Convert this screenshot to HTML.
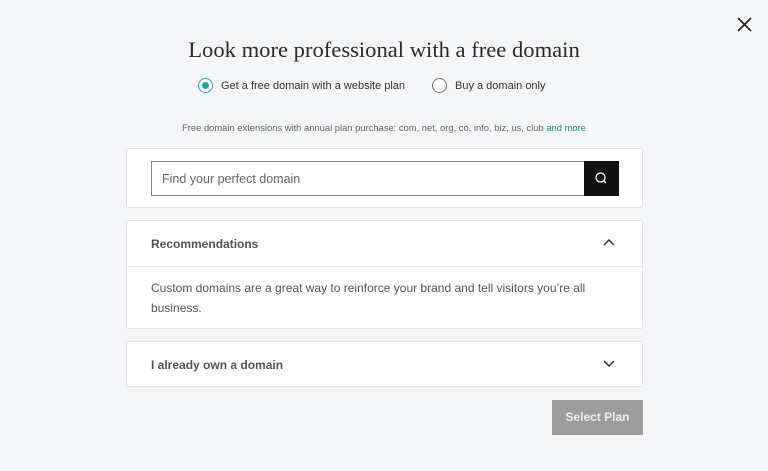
<!DOCTYPE html>
<html><head><style>
*{box-sizing:border-box;margin:0;padding:0}
body{width:768px;height:471px;background:#f5f6f8;font-family:"Liberation Sans",sans-serif;position:relative;overflow:hidden;color:#444}
.abs{position:absolute}
h1{position:absolute;top:37px;left:0;width:768px;text-align:center;font-family:"Liberation Serif",serif;font-weight:normal;font-size:22.6px;color:#2b2b2b}
.radio{position:absolute;width:15px;height:15px;border-radius:50%;border:1px solid #777;background:#fff}
.lbl{position:absolute;font-size:11px;color:#333}
.card{position:absolute;left:126px;width:517px;background:#fff;border:1px solid #e0e2e6;border-radius:3px}
</style></head><body>
<svg class="abs" style="left:737px;top:17px" width="15" height="15"><path d="M1 1L14 14M14 1L1 14" stroke="#222" stroke-width="1.6"/></svg>
<h1>Look more professional with a free domain</h1>
<div class="radio" style="left:198px;top:78px;border:1.5px solid #1ba5a5"><div style="position:absolute;left:2.5px;top:2.5px;width:7px;height:7px;border-radius:50%;background:#1ba5a5"></div></div>
<div class="lbl" style="left:221px;top:80px">Get a free domain with a website plan</div>
<div class="radio" style="left:432px;top:78px"></div>
<div class="lbl" style="left:455px;top:80px">Buy a domain only</div>
<div class="abs" style="left:0;width:768px;top:122px;text-align:center;font-size:9.4px;color:#666">Free domain extensions with annual plan purchase: com, net, org, co, info, biz, us, club <span style="color:#1a8a8a">and more</span></div>
<div class="card" style="top:148px;height:60px">
 <div class="abs" style="left:24px;top:12px;width:434px;height:35px;border:1px solid #888;border-right:none;font-size:12.5px;color:#666;padding:10px 10px">Find your perfect domain</div>
 <div class="abs" style="left:457px;top:12px;width:35px;height:35px;background:#111"><svg width="35" height="35"><circle cx="16.5" cy="16.5" r="4.5" stroke="#fff" stroke-width="1.3" fill="none"/><path d="M19.5 19.5L22 22" stroke="#fff" stroke-width="1.3"/></svg></div>
</div>
<div class="card" style="top:220px;height:109px">
 <div class="abs" style="left:24px;top:16px;font-size:12px;color:#555;font-weight:bold">Recommendations</div>
 <svg class="abs" style="left:476px;top:17px" width="12" height="10"><path d="M1 7L6 2L11 7" stroke="#333" stroke-width="1.5" fill="none"/></svg>
 <div class="abs" style="left:0;top:45px;width:515px;border-top:1px solid #e5e7ea"></div>
 <div class="abs" style="left:24px;top:57px;width:480px;font-size:12px;line-height:20px;color:#555">Custom domains are a great way to reinforce your brand and tell visitors you’re all business.</div>
</div>
<div class="card" style="top:341px;height:46px">
 <div class="abs" style="left:24px;top:16px;font-size:12px;color:#555;font-weight:bold">I already own a domain</div>
 <svg class="abs" style="left:476px;top:17px" width="12" height="10"><path d="M1 2L6 7L11 2" stroke="#333" stroke-width="1.5" fill="none"/></svg>
</div>
<div class="abs" style="left:552px;top:400px;width:91px;height:35px;background:#9c9c9c;color:#eee;font-size:12px;font-weight:bold;text-align:center;line-height:35px">Select Plan</div>
</body></html>
